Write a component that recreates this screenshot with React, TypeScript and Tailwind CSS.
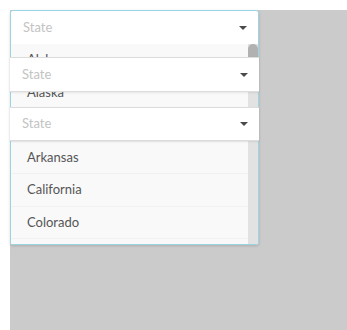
import React from 'react';

const STATES = ['Alabama', 'Alaska', 'Arizona', 'Arkansas', 'California', 'Colorado', 'Connecticut'];

const Caret = () => (
    <svg width="8" height="4" viewBox="0 0 8 4" className="shrink-0">
        <path d="M0 0 L8 0 L4 4 Z" fill="#4a4a4a" />
    </svg>
);

const Control: React.FC<{ className?: string }> = ({ className = '' }) => (
    <div className={`h-[33px] flex items-center justify-between pl-[12px] pr-[11px] bg-white ${className}`}>
        <span className="text-[13px] text-[#c3c3c3]">State</span>
        <Caret />
    </div>
);

export default function App() {
    return (
        <div className="w-[347px] h-[330px] bg-white pl-[10px] pt-[10px] overflow-hidden" style={{ fontFamily: 'Lato, "Open Sans", sans-serif' }}>
            <div className="w-full h-full bg-[#cbcbcb]">
                <div className="relative w-[249px] border border-[#9ad5e3] rounded-[3px] bg-white shadow-[0_1px_3px_rgba(0,0,0,0.15)]">
                    <Control className="rounded-t-[3px]" />
                    <div className="flex h-[200px] overflow-hidden">
                        <div className="flex-1 bg-[#f9f9f9]">
                            {STATES.map(s => (
                                <div key={s} className="h-[32.5px] flex items-center pl-[16px] text-[13px] text-[#555555] border-b border-[#f1f1f1]">
                                    {s}
                                </div>
                            ))}
                        </div>
                        <div className="w-[10px] bg-[#e2e2e2]">
                            <div className="h-[34px] bg-[#b1b1b1] rounded-t-[5px]" />
                        </div>
                    </div>

                    {/* overlapping sticky controls */}
                    <Control className="absolute left-[-1px] right-[-1px] top-[46px] !h-[35px] border-y border-[#dcdcdc] shadow-[0_1px_2px_rgba(0,0,0,0.08)]" />
                    <Control className="absolute left-[-1px] right-[-1px] top-[96px] !h-[34px] border-y border-[#dcdcdc] shadow-[0_1px_2px_rgba(0,0,0,0.08)]" />
                </div>
            </div>
        </div>
    );
}
